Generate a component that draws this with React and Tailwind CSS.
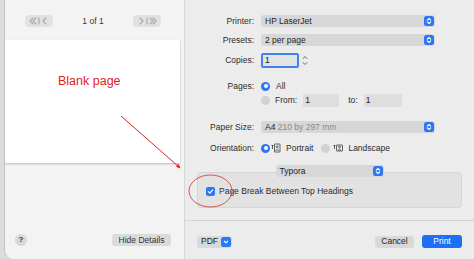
import React from 'react';

const BLUE = 'bg-[#2b77f5]';

const Stepper = () => (
  <div className={`w-[10px] h-[10px] rounded-[2.5px] ${BLUE} flex items-center justify-center`}>
    <svg width="10" height="10" viewBox="0 0 10 10" fill="none" stroke="white" strokeWidth="1.1" strokeLinecap="round" strokeLinejoin="round">
      <path d="M3.3 4.1 L5 2.5 L6.7 4.1" />
      <path d="M3.3 5.9 L5 7.5 L6.7 5.9" />
    </svg>
  </div>
);

const Popup = ({ className = '', children }) => (
  <div className={`h-[12px] rounded-[3px] bg-[#d7d7d7] flex items-center justify-between pl-[4px] pr-[1px] ${className}`}>
    <span className="font-medium text-[#1e1e1e] leading-none">{children}</span>
    <Stepper />
  </div>
);

const Radio = ({ on }) =>
  on ? (
    <div className={`w-[9px] h-[9px] rounded-full ${BLUE} flex items-center justify-center shrink-0`}>
      <div className="w-[4px] h-[4px] rounded-full bg-white" />
    </div>
  ) : (
    <div className="w-[9px] h-[9px] rounded-full bg-[#d2d2d2] shrink-0" />
  );

const Row = ({ label, className = 'h-[12px]', children }) => (
  <div className={`flex items-center ${className}`}>
    <div className="w-[69px] text-right text-[#2b2b2b] leading-none">{label}</div>
    <div className="ml-[7px] flex items-center">{children}</div>
  </div>
);

const PageIcon = ({ landscape }) => (
  <svg width="10" height="10" viewBox="0 0 10 10" fill="none" stroke="#3a3a3a" strokeWidth="0.8">
    <path d="M1.5 2 V6 M0.5 3 L1.5 2 L2.5 3" />
    {landscape ? (
      <>
        <rect x="3.5" y="2" width="6" height="6" rx="0.5" />
        <circle cx="6.5" cy="4" r="0.9" />
        <path d="M4.8 7.4 Q6.5 5.2 8.2 7.4" />
      </>
    ) : (
      <>
        <rect x="3.5" y="1" width="5.5" height="8" rx="0.5" />
        <circle cx="6.25" cy="3.8" r="0.9" />
        <path d="M4.5 7.6 Q6.25 5.4 8 7.6" />
      </>
    )}
  </svg>
);

const NavButton = ({ right }) => (
  <div className="w-[28px] h-[12px] rounded-[4px] bg-[#e1e1e1] flex items-center justify-center">
    <svg width="22" height="10" viewBox="0 0 22 10" fill="none" stroke="#a8a8a8" strokeWidth="1.1" strokeLinecap="round" strokeLinejoin="round">
      {right ? (
        <>
          <path d="M4 2 L7 5 L4 8" />
          <path d="M11 2 V8" />
          <path d="M14 2 L17 5 L14 8 M17 2 L20 5 L17 8" />
        </>
      ) : (
        <>
          <path d="M5 2 L2 5 L5 8 M8 2 L5 5 L8 8" />
          <path d="M11 2 V8" />
          <path d="M18 2 L15 5 L18 8" />
        </>
      )}
    </svg>
  </div>
);

export default function App() {
  return (
    <div className="relative w-[474px] h-[259px] bg-[#dcdcdc] pl-[4px] overflow-hidden font-['Liberation_Sans',Arial,sans-serif] text-[8.5px]">
      <div className="flex h-full rounded-bl-[9px] overflow-hidden border-l border-[#c2c2c2]">
        {/* Preview side */}
        <div className="w-[180px] bg-[#f3f3f3] border-r border-[#d6d6d6] flex flex-col">
          <div className="h-[40px] flex items-start pt-[15px] pl-[20px] pr-[23px]">
            <NavButton />
            <div className="flex-1 text-center text-[#3a3a3a] leading-[12px]">1 of 1</div>
            <NavButton right />
          </div>
          <div className="w-[175px] h-[123px] bg-white shadow-[0_1px_2px_rgba(0,0,0,0.25)] pt-[35px] pl-[53px]">
            <span className="text-[12.5px] text-[#e3201b] leading-none">Blank page</span>
          </div>
          <div className="flex-1" />
          <div className="flex items-center justify-between pl-[10px] pr-[13px] pb-[13px]">
            <div className="w-[12px] h-[12px] rounded-full bg-[#d9d9d9] flex items-center justify-center text-[8px] font-bold text-[#333]">?</div>
            <div className="w-[59px] h-[12px] rounded-[3px] bg-[#dbdbdb] flex items-center justify-center font-medium text-[#333] leading-none">
              Hide Details
            </div>
          </div>
        </div>

        {/* Settings side */}
        <div className="flex-1 bg-[#ececec] flex flex-col pt-[15px]">
          <Row label="Printer:">
            <Popup className="w-[174px]">HP LaserJet</Popup>
          </Row>
          <Row label="Presets:" className="h-[12px] mt-[7px]">
            <Popup className="w-[174px]">2 per page</Popup>
          </Row>
          <Row label="Copies:" className="h-[15px] mt-[7px]">
            <div className="w-[38px] h-[15px] bg-[#e3e3e3] rounded-[2px] border-[2px] border-[#3d82f0] flex items-center pl-[2px] text-[#111] font-medium leading-none">1</div>
            <svg className="ml-[3px]" width="6" height="13" viewBox="0 0 6 13" fill="none" stroke="#6b6b6b" strokeWidth="1" strokeLinecap="round" strokeLinejoin="round">
              <path d="M1 4.5 L3 2.5 L5 4.5" />
              <path d="M1 8.5 L3 10.5 L5 8.5" />
            </svg>
          </Row>
          <Row label="Pages:" className="h-[12px] mt-[12px]">
            <Radio on />
            <span className="ml-[6px] text-[#2b2b2b] leading-none">All</span>
          </Row>
          <Row label="" className="h-[13px] mt-[2px]">
            <Radio />
            <span className="ml-[5px] text-[#2b2b2b] leading-none">From:</span>
            <div className="ml-[6px] w-[36px] h-[13px] bg-[#dedede] flex items-center pl-[2px] leading-none text-[#222]">1</div>
            <span className="ml-[9px] text-[#2b2b2b] leading-none">to:</span>
            <div className="ml-[6px] w-[38px] h-[13px] bg-[#dedede] flex items-center pl-[2px] leading-none text-[#222]">1</div>
          </Row>
          <Row label="Paper Size:" className="h-[12px] mt-[14px]">
            <Popup className="w-[174px]">
              A4 <span className="font-normal text-[#8a8a8a]">210 by 297 mm</span>
            </Popup>
          </Row>
          <Row label="Orientation:" className="h-[12px] mt-[9px]">
            <Radio on />
            <span className="ml-[1px]"><PageIcon /></span>
            <span className="ml-[5px] text-[#2b2b2b] leading-none">Portrait</span>
            <span className="ml-[8px]"><Radio /></span>
            <span className="ml-[3px]"><PageIcon landscape /></span>
            <span className="ml-[5px] text-[#2b2b2b] leading-none">Landscape</span>
          </Row>

          <div className="mt-[11px] flex justify-center relative z-10">
            <Popup className="w-[108px]">Typora</Popup>
          </div>
          <div className="-mt-[5px] mx-[12px] h-[36px] rounded-[4px] bg-[#e2e2e2] border border-[#d5d5d5] pt-[12px] pl-[8px]">
            <div className="flex items-center h-[12px]">
              <div className={`w-[9px] h-[9px] rounded-[2px] ${BLUE} flex items-center justify-center`}>
                <svg width="7" height="7" viewBox="0 0 7 7" fill="none" stroke="white" strokeWidth="1.2" strokeLinecap="round" strokeLinejoin="round">
                  <path d="M1.3 3.7 L2.8 5.2 L5.7 1.8" />
                </svg>
              </div>
              <span className="ml-[4px] text-[#2b2b2b] leading-none">Page Break Between Top Headings</span>
            </div>
          </div>

          <div className="mt-[12px] border-t border-[#d4d4d4] flex items-center justify-between pt-[14px] pl-[12px] pr-[12px]">
            <div className="w-[35px] h-[12px] rounded-[3px] bg-[#d9d9d9] flex items-center justify-between pl-[4px] pr-[1px]">
              <span className="text-[#222] font-medium leading-none">PDF</span>
              <div className={`w-[10px] h-[10px] rounded-[2.5px] ${BLUE} flex items-center justify-center`}>
                <svg width="8" height="8" viewBox="0 0 8 8" fill="none" stroke="white" strokeWidth="1.1" strokeLinecap="round" strokeLinejoin="round">
                  <path d="M2.3 3.2 L4 4.9 L5.7 3.2" />
                </svg>
              </div>
            </div>
            <div className="flex items-center gap-[8px]">
              <div className="w-[39px] h-[12px] rounded-[3px] bg-[#d9d9d9] flex items-center justify-center text-[#222] font-medium leading-none">Cancel</div>
              <div className="w-[40px] h-[13px] rounded-[3px] bg-[#1d70f5] flex items-center justify-center text-white font-medium leading-none">Print</div>
            </div>
          </div>
        </div>
      </div>

      {/* Red annotations drawn over the dialog */}
      <svg className="absolute left-0 top-0 pointer-events-none" width="474" height="259" viewBox="0 0 474 259" fill="none">
        <path d="M121 116 L179 167" stroke="#d8242a" strokeWidth="1" />
        <path d="M176.5 166.5 L180 168 L178.3 164.3 Z" fill="#d8242a" stroke="#d8242a" strokeWidth="0.8" />
        <ellipse cx="210.5" cy="191" rx="21.5" ry="16" stroke="#d2453f" strokeWidth="0.9" />
      </svg>
    </div>
  );
}
